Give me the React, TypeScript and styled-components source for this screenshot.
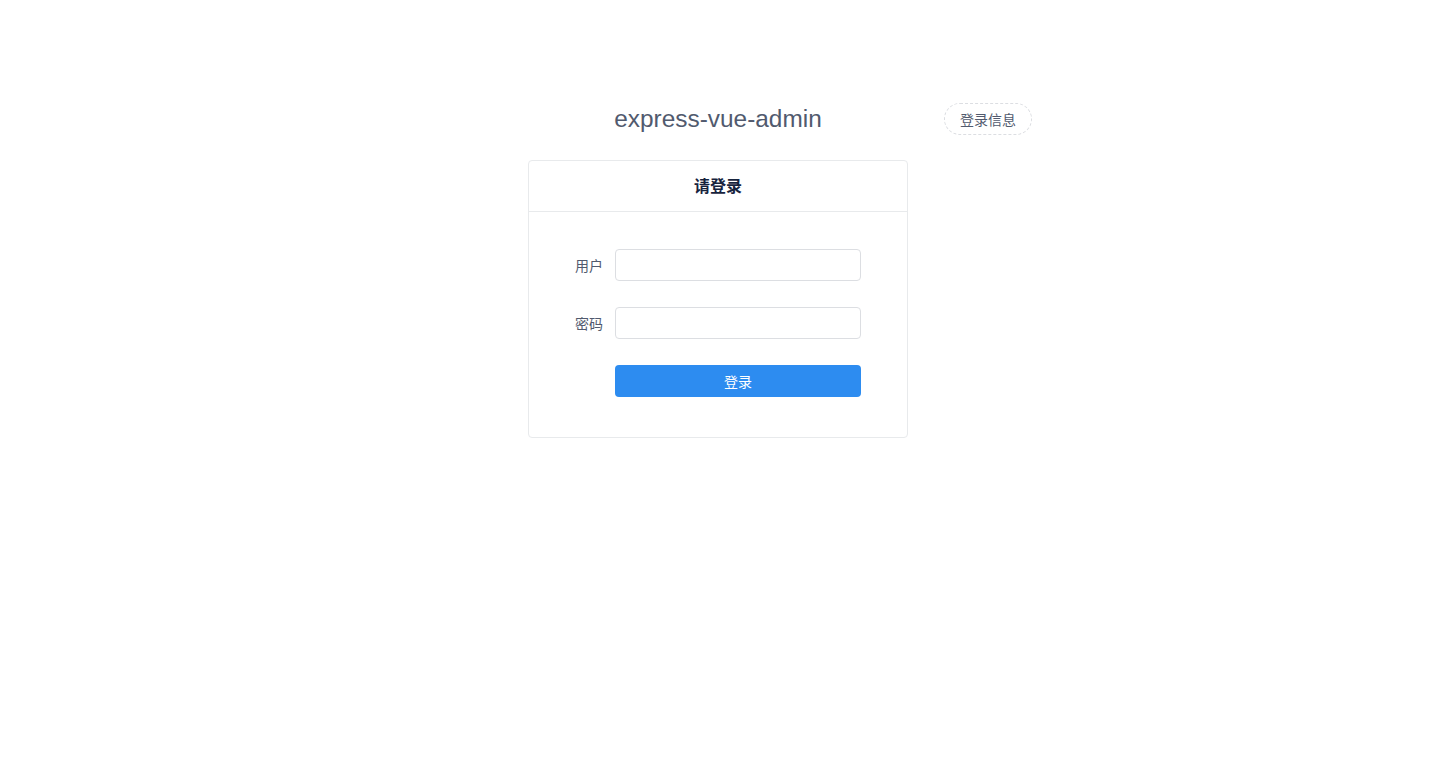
import styled, { createGlobalStyle } from 'styled-components';

const GlobalStyle = createGlobalStyle`
  html, body {
    margin: 0;
    padding: 0;
    background: #fff;
  }
  body {
    font-family: "Liberation Sans", "Noto Sans CJK SC", sans-serif;
    color: #515a6e;
    font-size: 14px;
  }
  * {
    box-sizing: border-box;
  }
`;

function App() {
  return (
    <>
      <GlobalStyle />
      <StyledPage>
        <StyledTopRow>
          <StyledTitle>express-vue-admin</StyledTitle>
          <StyledInfoButton type="button">登录信息</StyledInfoButton>
        </StyledTopRow>

        <StyledCard>
          <StyledCardHeader>请登录</StyledCardHeader>
          <StyledCardBody>
            <StyledFormItem>
              <StyledLabel>用户</StyledLabel>
              <StyledInput type="text" />
            </StyledFormItem>
            <StyledFormItem>
              <StyledLabel>密码</StyledLabel>
              <StyledInput type="password" />
            </StyledFormItem>
            <StyledFormItem>
              <StyledLabel />
              <StyledSubmit type="button">登录</StyledSubmit>
            </StyledFormItem>
          </StyledCardBody>
        </StyledCard>
      </StyledPage>
    </>
  );
}

export default App;

const StyledPage = styled.div`
  display: flex;
  flex-direction: column;
  align-items: center;
  padding-top: 103px;
  min-height: 766px;
`;

const StyledTopRow = styled.div`
  display: grid;
  grid-template-columns: 1fr 380px 1fr;
  align-items: center;
  width: 100%;
  height: 32px;
  margin-bottom: 25px;
`;

const StyledTitle = styled.h1`
  grid-column: 2;
  margin: 0;
  text-align: center;
  font-size: 24.4px;
  font-weight: 400;
  color: #515a6e;
  line-height: 32px;
`;

const StyledInfoButton = styled.button`
  grid-column: 3;
  justify-self: start;
  margin-left: 36px;
  width: 88px;
  height: 32px;
  padding: 0 15px;
  border: 1px dashed #dcdee2;
  border-radius: 16px;
  background: #fff;
  color: #515a6e;
  font-family: inherit;
  font-size: 14px;
  cursor: pointer;
`;

const StyledCard = styled.div`
  width: 380px;
  border: 1px solid #e8eaec;
  border-radius: 4px;
  background: #fff;
`;

const StyledCardHeader = styled.div`
  height: 51px;
  padding-bottom: 3px;
  border-bottom: 1px solid #e8eaec;
  display: flex;
  align-items: center;
  justify-content: center;
  font-size: 16px;
  font-weight: 700;
  color: #17233d;
`;

const StyledCardBody = styled.div`
  padding: 37px 16px 14px;
`;

const StyledFormItem = styled.div`
  display: flex;
  align-items: center;
  margin-bottom: 26px;
`;

const StyledLabel = styled.label`
  width: 70px;
  padding-right: 12px;
  text-align: right;
  font-size: 14px;
  color: #515a6e;
`;

const StyledInput = styled.input`
  width: 246px;
  height: 32px;
  padding: 4px 7px;
  border: 1px solid #dcdee2;
  border-radius: 4px;
  font-size: 12px;
  color: #515a6e;
  outline: none;
`;

const StyledSubmit = styled.button`
  width: 246px;
  height: 32px;
  border: none;
  border-radius: 4px;
  background: #2d8cf0;
  color: #fff;
  font-family: inherit;
  font-size: 14px;
  cursor: pointer;
`;
